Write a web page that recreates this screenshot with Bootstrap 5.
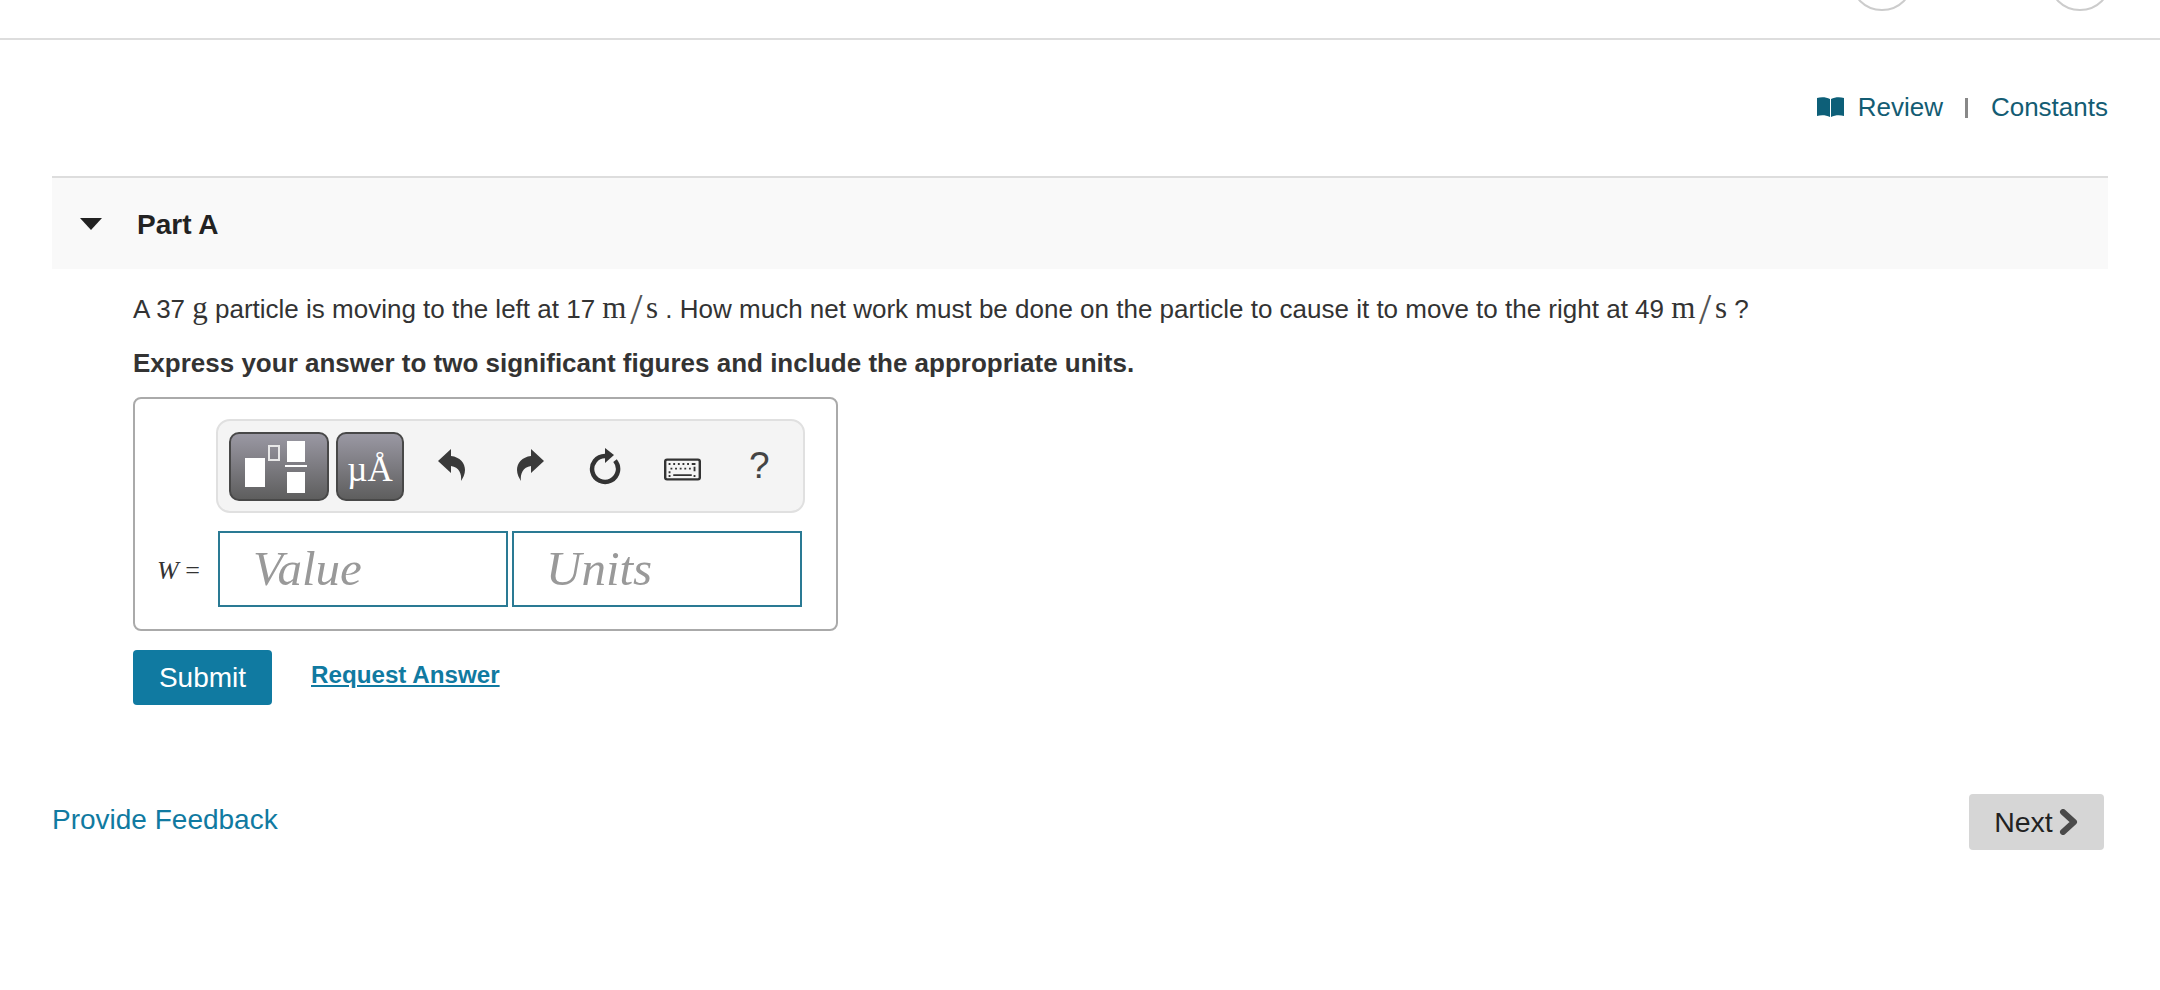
<!DOCTYPE html>
<html lang="en">
<head>
<meta charset="utf-8">
<title>Part A</title>
<link href="https://cdn.jsdelivr.net/npm/bootstrap@5.3.0/dist/css/bootstrap.min.css" rel="stylesheet">
<style>
html,body{height:100%}
body{font-family:"Liberation Sans",Arial,sans-serif;color:#333;background:#fff;font-size:26px;overflow:hidden}
a{text-decoration:none}
.topbar{height:40px;border-bottom:2px solid #ddd;overflow:hidden;padding-right:48px;gap:134px}
.ringbtn{width:64px;height:64px;border:2px solid #ccc;border-radius:50%;margin-top:-53px;flex:none}
.page{padding:0 52px}
.toolrow{height:136px;padding-top:50px;align-items:flex-start;line-height:34px}
.toolrow a{color:#135c73;font-size:26px}
.toolsep{width:3px;height:20px;background:#888;margin:8px 23px 0 22px}
.bookic{width:27px;height:22px;margin:6px 14px 0 0}
.partbar{height:93px;background:#f9f9f9;border-top:2px solid #ddd;padding:2px 0 0 28px;font-weight:700;font-size:28px;color:#222}
.tri{width:0;height:0;border-left:11px solid transparent;border-right:11px solid transparent;border-top:12px solid #222;margin:-2px 35px 0 0}
.body-part{padding:20px 0 0 81px}
.qline{line-height:38px;margin:0 0 16px;white-space:nowrap;font-size:26px}
.qbold{line-height:38px;margin:0 0 15px;font-weight:700;font-size:26px}
.mth{font-family:"Liberation Serif","Times New Roman",serif;font-size:31px}
.mth i{font-style:normal;font-size:44px;font-weight:400;line-height:20px;margin:0 3.700px;vertical-align:-6px;color:#555}
.answerbox{width:705px;height:234px;border:2px solid #aaa;border-radius:8px;padding:20px 0 0 81px}
.edbar{width:589px;height:94px;background:#f4f4f4;border:2px solid #e0e0e0;border-radius:14px;padding:0 11px}
.tplbtn{height:69px;border:2px solid #484848;border-radius:10px;background:linear-gradient(#9a98a3,#5e5e5e);color:#fff;flex:none;justify-content:center;align-items:center}
.tplbtn.wide{width:100px}
.tplbtn.narrow{width:68px;margin-left:7px;font-family:"Liberation Serif",serif;font-size:35px;line-height:1;padding-top:6px}
.edicon{flex:none;display:block}
.up3{margin-bottom:3px}
.dn3{margin-top:6px}
.helpq{font-size:37px;color:#444;line-height:1;margin-bottom:2px}
.ansrow{margin:18px 0 0 -59px;align-items:center}
.wlabel{width:61px;font-family:"Liberation Serif",serif;font-size:26px;white-space:nowrap;padding-top:3px}
.ansinput{width:290px;height:76px;border:2px solid #2a7a94;font-family:"Liberation Serif",serif;font-style:italic;font-size:49px;color:#999;padding-left:33px;line-height:72px}
.ansinput+.ansinput{margin-left:4px;padding-left:32px}
.actrow{margin-top:19px;align-items:flex-start}
.btnsub{height:55px;width:139px;padding:0;background:#107aa1;border:0;border-radius:4px;color:#fff;font-size:28px;line-height:55px}
.reqlink{margin-left:39px;color:#107aa1;font-size:24.2px;font-weight:700;text-decoration:underline;line-height:50px}
.foot{margin-top:89px;align-items:flex-start;padding-right:4px}
.fblink{color:#107aa1;font-size:28px;line-height:52px}
.nextbtn{width:135px;height:56px;background:#d6d6d6;border:0;border-radius:4px;color:#222;font-size:28.5px;padding:0;gap:6px}
</style>
</head>
<body>
<div class="topbar d-flex justify-content-end">
  <div class="ringbtn"></div>
  <div class="ringbtn"></div>
</div>
<div class="page">
  <div class="toolrow d-flex justify-content-end">
    <svg class="bookic" viewBox="0 0 27 22"><path fill="#0d5f78" d="M0 2c4-1 9-1 13 1v18c-4-2-9-2-13-1zM27 2c-4-1-9-1-13 1v18c4-2 9-2 13-1z"/></svg>
    <a href="#">Review</a>
    <span class="toolsep"></span>
    <a href="#">Constants</a>
  </div>
  <div class="partbar d-flex align-items-center"><span class="tri"></span><span>Part A</span></div>
  <div class="body-part">
    <p class="qline">A 37 <span class="mth">g</span> particle is moving to the left at 17 <span class="mth">m<i>/</i>s</span> . How much net work must be done on the particle to cause it to move to the right at 49 <span class="mth">m<i>/</i>s</span> ?</p>
    <p class="qbold">Express your answer to two significant figures and include the appropriate units.</p>
    <div class="answerbox">
      <div class="edbar d-flex align-items-center">
        <div class="tplbtn wide d-flex">
          <svg width="96" height="65" viewBox="0 0 96 65"><path fill="#fff" d="M14 24h20v29H14zM56 7h18v21H56zM56 38h18v21H56zM54 31h22v2H54z"/><path fill="none" stroke="#e8e8e8" stroke-width="2" d="M38 12h10v14H38z"/></svg>
        </div>
        <div class="tplbtn narrow d-flex">µÅ</div>
        <svg class="edicon up3" style="margin-left:34px" width="28" height="32" viewBox="0 0 28 32"><path fill="#3a3a3a" d="M0 12 13 0v7c9 1 14 7 14 14 0 4-2 8-4 11 1-7-2-14-10-15v7z"/></svg>
        <svg class="edicon up3" style="margin-left:50px" width="28" height="32" viewBox="0 0 28 32"><path fill="#3a3a3a" d="M28 12 15 0v7C6 8 1 14 1 21c0 4 2 8 4 11-1-7 2-14 10-15v7z"/></svg>
        <svg class="edicon" style="margin-left:45px" width="34" height="38" viewBox="0 0 34 38"><path fill="none" stroke="#333" stroke-width="4.500" d="M26 13.600A13 13 0 1 1 16 9"/><path fill="#333" d="M16 1l9 7-9 8z"/></svg>
        <svg class="edicon dn3" style="margin-left:41px" width="37" height="25" viewBox="0 0 40 24"><rect x="1.300" y="1.300" width="37.400" height="21.400" rx="2" fill="#f4f4f4" stroke="#333" stroke-width="2.600"/><path fill="#333" d="M5 5h2v2H5zM10 5h2v2h-2zM15 5h2v2h-2zM20 5h2v2h-2zM25 5h2v2h-2zM30 5h4v2h-4zM7 10h2v2H7zM12 10h2v2h-2zM17 10h2v2h-2zM22 10h2v2h-2zM27 10h2v2h-2zM32 9h2v5h-2zM5 14h2v2H5zM5 18h2v2H5zM10 17h20v2H10zM32 18h2v2h-2z"/></svg>
        <span class="helpq" style="margin-left:48px">?</span>
      </div>
      <div class="ansrow d-flex">
        <div class="wlabel"><em>W</em> =</div>
        <div class="ansinput">Value</div>
        <div class="ansinput">Units</div>
      </div>
    </div>
    <div class="actrow d-flex">
      <button class="btnsub btn" type="button">Submit</button>
      <a class="reqlink" href="#">Request Answer</a>
    </div>
  </div>
  <div class="foot d-flex justify-content-between">
    <a class="fblink" href="#">Provide Feedback</a>
    <button class="nextbtn btn d-flex align-items-center justify-content-center" type="button">Next<svg width="20" height="26" viewBox="0 0 20 26"><path fill="none" stroke="#4a4a4a" stroke-width="6" stroke-linecap="round" stroke-linejoin="round" d="M4 3l11 10L4 23"/></svg></button>
  </div>
</div>
<script src="https://cdn.jsdelivr.net/npm/bootstrap@5.3.0/dist/js/bootstrap.bundle.min.js"></script>
</body>
</html>
